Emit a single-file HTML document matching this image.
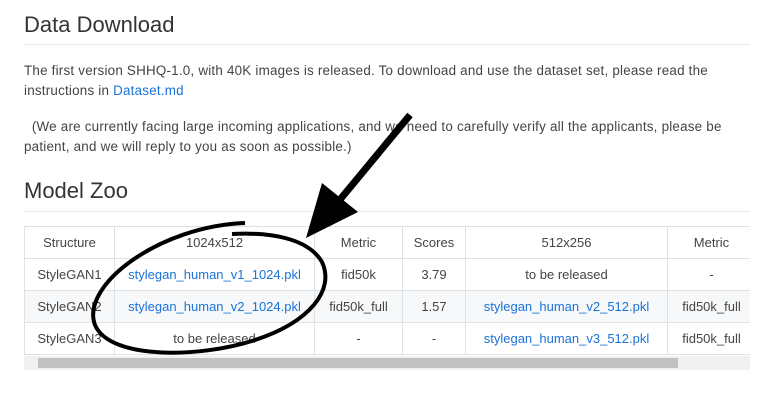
<!DOCTYPE html>
<html><head><meta charset="utf-8"><style>
body{margin:0;width:768px;height:402px;background:#fff;overflow:hidden;font-family:"Liberation Sans",sans-serif;color:#24292e;position:relative}
.a{position:absolute;white-space:nowrap}
h{position:absolute;left:24px;font-size:22px;color:#333}
.hr{position:absolute;left:24px;width:726px;height:1px;background:#e6e8ea}
.p{font-size:13.4px;color:#444;letter-spacing:0.22px}
a{color:#1a73d9;text-decoration:none}
table{position:absolute;left:0;top:0;border-collapse:collapse;font-size:13px;color:#444;table-layout:fixed;width:780px}
td{border:1px solid #dfe2e5;height:31px;padding:0;text-align:center;white-space:nowrap;overflow:hidden}
tr.g td{background:#f6f8fa}
</style></head><body>
<h style="top:12px">Data Download</h>
<div class="hr" style="top:44px"></div>
<div class="a p" style="left:24px;top:63px">The first version SHHQ-1.0, with 40K images is released. To download and use the dataset set, please read the</div>
<div class="a p" style="left:24px;top:83px">instructions in <a>Dataset.md</a></div>
<div class="a p" style="left:24px;top:119px">&nbsp;&nbsp;(We are currently facing large incoming applications, and we need to carefully verify all the applicants, please be</div>
<div class="a p" style="left:24px;top:139px">patient, and we will reply to you as soon as possible.)</div>
<h style="top:178px">Model Zoo</h>
<div class="hr" style="top:211px"></div>
<div style="position:absolute;left:24px;top:226px;width:726px;height:144px;overflow:hidden">
<table>
<colgroup><col style="width:90px"><col style="width:200px"><col style="width:88px"><col style="width:63px"><col style="width:202px"><col style="width:88px"><col style="width:49px"></colgroup>
<tr><td>Structure</td><td>1024x512</td><td>Metric</td><td>Scores</td><td>512x256</td><td>Metric</td><td></td></tr>
<tr><td>StyleGAN1</td><td><a>stylegan_human_v1_1024.pkl</a></td><td>fid50k</td><td>3.79</td><td>to be released</td><td>-</td><td></td></tr>
<tr class="g"><td>StyleGAN2</td><td><a>stylegan_human_v2_1024.pkl</a></td><td>fid50k_full</td><td>1.57</td><td><a>stylegan_human_v2_512.pkl</a></td><td>fid50k_full</td><td></td></tr>
<tr><td>StyleGAN3</td><td>to be released</td><td>-</td><td>-</td><td><a>stylegan_human_v3_512.pkl</a></td><td>fid50k_full</td><td></td></tr>
</table>
<div style="position:absolute;left:0;top:130px;width:726px;height:14px;background:#f1f1f1"></div>
<div style="position:absolute;left:14px;top:132px;width:640px;height:10px;background:#c1c1c1"></div>
</div>
<svg style="position:absolute;left:0;top:0" width="768" height="402">
<line x1="410" y1="115" x2="338" y2="202" stroke="#000" stroke-width="7"/>
<polygon points="306,238 322,183 358,212" fill="#000"/>
<path d="M245 223 C160 226 80 285 95 325 C110 360 200 358 255 340 C310 322 335 290 322 262 C308 238 270 232 232 234" fill="none" stroke="#000" stroke-width="4"/>
</svg>
</body></html>
